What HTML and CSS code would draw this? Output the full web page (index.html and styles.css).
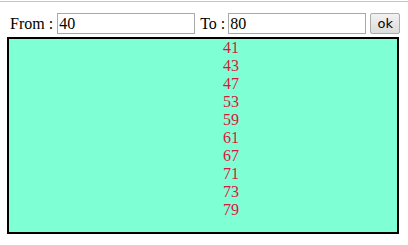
FILE: index.html
```html
<!DOCTYPE html>
<html>
<head>
<meta charset="utf-8">
<link rel="stylesheet" href="styles.css">
</head>
<body>
<div class="topline"></div>
<div class="form">
  <span class="label">From :</span>
  <input class="field" type="text" value="40">
  <span class="label label-to">To :</span>
  <input class="field" type="text" value="80">
  <button class="ok">ok</button>
</div>
<div class="result">
  <div>41</div>
  <div>43</div>
  <div>47</div>
  <div>53</div>
  <div>59</div>
  <div>61</div>
  <div>67</div>
  <div>71</div>
  <div>73</div>
  <div>79</div>
</div>
</body>
</html>
```
FILE: styles.css
```css
html, body {
  margin: 0;
  padding: 0;
  background: #fff;
}
body {
  font-family: "Liberation Serif", "Times New Roman", serif;
  font-size: 16px;
  color: #000;
}
.topline {
  margin-top: 1px;
  height: 1px;
  background: #c4c4c4;
}
.form {
  display: flex;
  align-items: center;
  height: 21px;
  margin-top: 11px;
  padding-left: 10px;
}
.label {
  margin-right: 4px;
}
.label-to {
  margin-left: 5px;
  margin-right: 3px;
}
.field {
  box-sizing: border-box;
  width: 138px;
  height: 21px;
  margin: 0;
  padding: 0 1px;
  border: 1px solid #a9a9a9;
  font-family: "Liberation Serif", "Times New Roman", serif;
  font-size: 16px;
  color: #000;
  background: #fff;
  outline: none;
}
.ok {
  box-sizing: border-box;
  width: 30px;
  height: 21px;
  margin: 0 0 0 4px;
  padding: 0;
  border: 1px solid #acacac;
  border-radius: 2px;
  background: linear-gradient(#f2f2f2, #dcdcdc);
  font-family: "DejaVu Sans", "Liberation Sans", sans-serif;
  font-size: 13px;
  color: #000;
}
.result {
  box-sizing: border-box;
  width: 392px;
  height: 197px;
  margin: 3px 0 0 7px;
  padding: 0 0 13px 56px;
  border: 2px solid #000;
  background: #7fffd4;
  color: #dc143c;
  text-align: center;
  line-height: 18px;
}
```
